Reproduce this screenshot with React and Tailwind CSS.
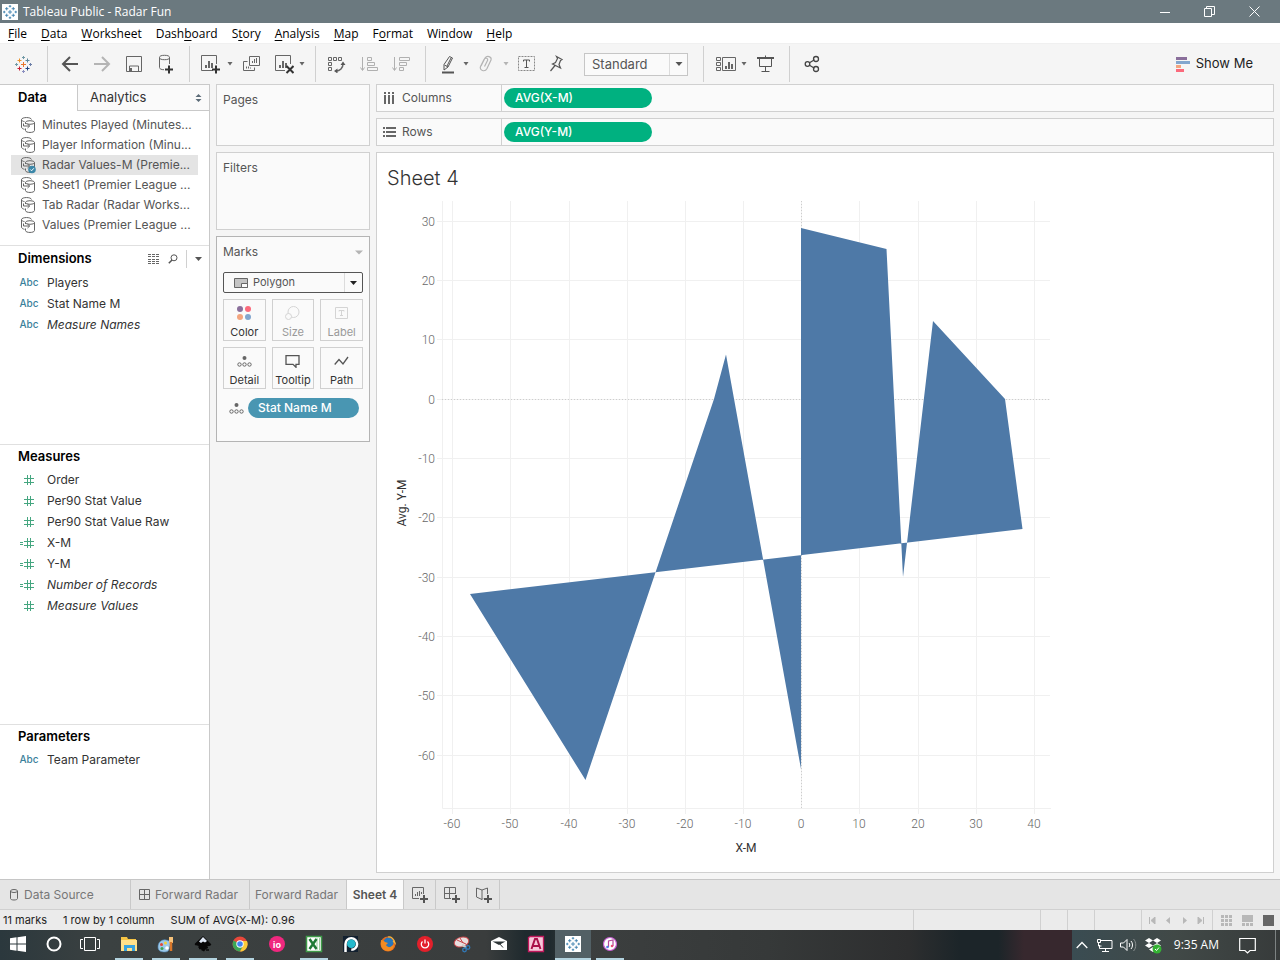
import React from "react";

/* Drawing whose viewBox origin is [x, y] and whose units are page pixels. */
function Art({ box, children, ...rest }) {
  const [x, y, w, h] = box;
  return (
    <svg width={w} height={h} viewBox={`${x} ${y} ${w} ${h}`} fill="none" className="shrink-0" aria-hidden="true" {...rest}>
      {children}
    </svg>
  );
}

const Caret = ({ color = "#666" }) => (
  <Art box={[0, 0, 6, 4]}>
    <path d="M0.5 0h5L3 3.5z" fill={color} />
  </Art>
);

const Divider = () => <div className="h-9 w-px shrink-0 bg-[#d0d0d0]" />;

function Tool({ label, className = "w-8", children }) {
  return (
    <button type="button" aria-label={label} className={`flex h-8 shrink-0 items-center justify-center ${className}`}>
      {children}
    </button>
  );
}

function SparkLogo({ size = 17, mono }) {
  const c = mono
    ? Array(9).fill(mono)
    : ["#e8762b", "#5b879b", "#eb9129", "#1f457e", "#c72035", "#7199a6", "#6d7fa8", "#7199a6", "#8b8fc0"];
  const plus = (x, y, r, k) => (
    <path key={`${x}-${y}`} d={`M${x - r} ${y}H${x + r}M${x} ${y - r}V${y + r}`} stroke={c[k]} />
  );
  return (
    <svg width={size} height={size} viewBox="0 0 17 17" fill="none" aria-hidden="true">
      {plus(8.5, 8.5, 2.5, 0)}
      {plus(12.5, 4.5, 2, 1)}
      {plus(4.5, 4.5, 2, 2)}
      {plus(12.5, 12.5, 2, 3)}
      {plus(4.5, 12.5, 2, 4)}
      {plus(8.5, 1.5, 1.5, 5)}
      {plus(15.5, 8.5, 1.5, 6)}
      {plus(1.5, 8.5, 1.5, 7)}
      {plus(8.5, 15.5, 1.5, 8)}
    </svg>
  );
}

const MENUS = [
  ["", "F", "ile"], ["", "D", "ata"], ["", "W", "orksheet"], ["Dash", "b", "oard"], ["S", "t", "ory"],
  ["", "A", "nalysis"], ["", "M", "ap"], ["F", "o", "rmat"], ["Wi", "n", "dow"], ["", "H", "elp"],
];

function TitleBar() {
  return (
    <header className="flex h-[23px] items-center bg-[#6b797f] font-['Open_Sans','Noto_Sans',sans-serif] text-white">
      <span className="ml-0.5 flex size-4 items-center justify-center bg-white">
        <SparkLogo size={14} mono="#2f78a8" />
      </span>
      <h1 className="ml-[5px] text-xs">Tableau Public - Radar Fun</h1>
      <div className="ml-auto flex h-full items-center pr-[3px]">
        <button type="button" aria-label="Minimize" className="flex w-[45px] justify-center">
          <Art box={[0, 0, 10, 10]}><path d="M0 5.5h10" stroke="#fff" /></Art>
        </button>
        <button type="button" aria-label="Restore" className="flex w-[45px] justify-center">
          <Art box={[0, 0, 11, 11]}><path d="M.5 2.5h7v8h-7zM2.5 2.5v-2h8v8h-3" stroke="#fff" /></Art>
        </button>
        <button type="button" aria-label="Close" className="flex w-[45px] justify-center">
          <Art box={[0, 0, 11, 11]}><path d="M.5.5l10 10M10.500.5l-10 10" stroke="#fff" /></Art>
        </button>
      </div>
    </header>
  );
}

function MenuBar() {
  return (
    <nav className="flex h-5 items-center gap-3.5 bg-white pt-px pl-2 font-['Open_Sans','Noto_Sans',sans-serif] text-xs text-black">
      {MENUS.map(([a, u, b]) => (
        <button type="button" key={a + u + b}>
          {a}<span className="underline underline-offset-2">{u}</span>{b}
        </button>
      ))}
    </nav>
  );
}

const Bars = ({ x, y, color = "#666" }) => (
  <path d={`M${x} ${y}v-3M${x + 3} ${y}v-7M${x + 6} ${y}v-5`} stroke={color} strokeWidth="2" />
);

function Toolbar() {
  return (
    <div className="flex h-[41px] items-center border-t border-[#f0f0f0] bg-[#f5f5f5]">
      <Tool label="Start page" className="w-[47px]"><SparkLogo /></Tool>
      <Divider />
      <div className="flex items-center pr-[7px] pl-1.5">
        <Tool label="Undo">
          <Art box={[61, 56, 18, 16]}><path d="M63 64h15M70 57l-7 7 7 7" stroke="#555" strokeWidth="2" /></Art>
        </Tool>
        <Tool label="Redo">
          <Art box={[93, 56, 18, 16]}><path d="M94 64h15M102 57l7 7-7 7" stroke="#b4b4b4" strokeWidth="2" /></Art>
        </Tool>
        <Tool label="Save">
          <Art box={[125, 55, 18, 18]}><path d="M126.500 56.500h15v15h-15zM129.500 71v-5h9v5M131 71v-3" stroke="#666" /><path d="M130 68h2v3h-2z" fill="#666" /></Art>
        </Tool>
        <Tool label="New data source">
          <Art box={[156, 55, 20, 20]}>
            <ellipse cx="164.500" cy="58.500" rx="5" ry="2.200" stroke="#666" />
            <path d="M159.500 58.500v10c0 1.500 2 2.200 4.500 2.200M169.500 58.500v6.500" stroke="#666" />
            <path d="M165 70.500h8M169 66.500v8" stroke="#333" strokeWidth="2" />
          </Art>
        </Tool>
      </div>
      <Divider />
      <div className="flex items-center pr-[9px] pl-1">
        <Tool label="New worksheet">
          <Art box={[200, 55, 20, 20]}>
            <path d="M213 71.500h-11.500v-15h15V65" stroke="#666" /><Bars x={206} y={69} />
            <path d="M212 70.500h8M216 66.500v8" stroke="#333" strokeWidth="2" />
          </Art>
        </Tool>
        <Tool label="New worksheet options" className="w-2"><Caret /></Tool>
        <Tool label="Duplicate" className="w-9">
          <Art box={[242, 55, 20, 18]}>
            <path d="M249.500 56.500h10v9h-10zM247.500 61.500h-4v9h11v-3" stroke="#666" />
            <path d="M252.500 63v-2M254.500 63v-4M256.500 63v-5M246.500 68.500v-2M248.500 68.500v-2M250.500 68.500v-1" stroke="#666" />
          </Art>
        </Tool>
        <Tool label="Clear sheet" className="w-7">
          <Art box={[273, 55, 20, 20]}>
            <path d="M284 71.500h-9.500v-15h15V65" stroke="#666" /><Bars x={279} y={69} />
            <path d="M285.500 67l7 7M292.500 67l-7 7" stroke="#333" strokeWidth="2" />
          </Art>
        </Tool>
        <Tool label="Clear options" className="w-2"><Caret /></Tool>
      </div>
      <Divider />
      <div className="flex items-center pr-2 pl-[5px]">
        <Tool label="Swap rows and columns">
          <Art box={[328, 55, 20, 18]}>
            <path d="M329.500 57.500h3v3h-3zM334.500 57.500h3v3h-3zM339.500 57.500h3v3h-3zM329.500 62.500h3v3h-3zM329.500 67.500h3v3h-3z" stroke="#666" />
            <path d="M344 64c0 4-3 7-7 7" stroke="#666" strokeWidth="1.500" />
            <path d="M341.500 65l2.500-3.500 2.500 3.500zM338.500 68.500l-3.500 2.500 3.500 2.500z" fill="#555" />
          </Art>
        </Tool>
        <Tool label="Sort ascending">
          <Art box={[360, 55, 20, 18]}>
            <path d="M363.500 57v13M361.500 67.500l2 3 2-3M368.500 57.500h4v3h-4zM368.500 62.500h7v3h-7zM368.500 67.500h10v3h-10z" stroke="#b0b0b0" />
          </Art>
        </Tool>
        <Tool label="Sort descending">
          <Art box={[392, 55, 20, 18]}>
            <path d="M395.500 57v13M393.500 67.500l2 3 2-3M400.500 57.500h10v3h-10zM400.500 62.500h7v3h-7zM400.500 67.500h4v3h-4z" stroke="#b0b0b0" />
          </Art>
        </Tool>
      </div>
      <Divider />
      <div className="flex items-center pr-[15px] pl-2">
        <Tool label="Highlight" className="w-7">
          <Art box={[440, 54, 16, 20]}>
            <path d="M442 72.500h12" stroke="#555" strokeWidth="2" />
            <path d="M449.500 56.500l3 1.500-4.500 9-4 3v-5.500zM444.500 65l3.500 2M451 58l-4 8" stroke="#555" />
          </Art>
        </Tool>
        <Tool label="Highlight options" className="w-2"><Caret /></Tool>
        <Tool label="Group members">
          <Art box={[477, 55, 16, 18]}>
            <path d="M480 66l4-8c2-3 7-1.500 6 2l-4 8.500c-2 4-8 2-6.500-2l3.500-7c1.500-2.500 4.500-1 3.500 1l-3 6" stroke="#b4b4b4" strokeWidth="1.200" />
          </Art>
        </Tool>
        <Tool label="Group options" className="w-2"><Caret color="#b4b4b4" /></Tool>
        <Tool label="Show mark labels">
          <Art box={[518, 55, 18, 18]}>
            <path d="M519.500 56.500h16v14h-16z" stroke="#888" strokeDasharray="2 1" />
            <path d="M524.500 61.500v-1.500h6v1.500M527.500 60v7.500M525.500 67.500h4" stroke="#555" />
          </Art>
        </Tool>
        <Tool label="Fix axes" className="w-[30px]">
          <Art box={[550, 55, 16, 18]}>
            <path d="M557.500 56.500l5.500 3-1.500 1-1.500 4 1.500 3.500-8-4 3-1.500 2-4zM556 65.500l-4.500 5.500" stroke="#555" strokeWidth="1.200" />
          </Art>
        </Tool>
        <div className="ml-3 grid h-[23px] w-[104px] items-center border border-[#c6c6c6] bg-[#fafafa]">
          <select aria-label="Fit" className="col-start-1 row-start-1 h-full w-full appearance-none bg-transparent pl-[7px] text-[13px] leading-5 text-[#555]">
            <option>Standard</option>
          </select>
          <span className="pointer-events-none col-start-1 row-start-1 flex h-full w-[18px] items-center justify-center justify-self-end border-l border-[#dcdcdc]">
            <Art box={[0, 0, 8, 4]}><path d="M.5 0h7L4 4z" fill="#555" /></Art>
          </span>
        </div>
      </div>
      <Divider />
      <div className="flex items-center pr-[5px] pl-2">
        <Tool label="Show/hide cards" className="w-7">
          <Art box={[715, 56, 22, 16]}>
            <path d="M716.500 57.500h4v3h-4zM716.500 62.500h4v3h-4zM716.500 67.500h4v3h-4zM722.500 57.500h13v13h-13z" stroke="#666" /><Bars x={726} y={69} />
          </Art>
        </Tool>
        <Tool label="Card options" className="w-2"><Caret /></Tool>
        <Tool label="Presentation mode" className="w-9">
          <Art box={[757, 55, 18, 18]}>
            <path d="M757 58h17" stroke="#555" strokeWidth="2" />
            <path d="M759.500 58v8.500h12V58M765.500 55.500v2M765.500 67v4M761.500 71.500h8" stroke="#555" />
          </Art>
        </Tool>
      </div>
      <Divider />
      <Tool label="Share" className="ml-1.5 w-8">
        <Art box={[804, 55, 16, 18]}>
          <path d="M809.500 62.800l5-3M809.500 65.200l5 3" stroke="#444" strokeWidth="1.300" />
          <circle cx="807.500" cy="64" r="2.300" stroke="#444" strokeWidth="1.300" />
          <circle cx="816" cy="59" r="2.500" stroke="#444" strokeWidth="1.300" />
          <circle cx="816" cy="69" r="2.500" stroke="#444" strokeWidth="1.300" />
        </Art>
      </Tool>
      <button type="button" className="mr-[27px] ml-auto flex items-center gap-1.5 text-[13px] text-[#222]">
        <Art box={[0, 0, 14, 15]}>
          <path d="M0 0h11v3H0z" fill="#8a6f9b" /><path d="M0 4h14v3H0z" fill="#82a6ce" />
          <path d="M0 8h5v3H0z" fill="#f3a57f" /><path d="M0 12h8v3H0z" fill="#fb6a7c" />
        </Art>
        Show Me
      </button>
    </div>
  );
}

const SOURCES = [
  "Minutes Played (Minutes...", "Player Information (Minu...", "Radar Values-M (Premie...",
  "Sheet1 (Premier League ...", "Tab Radar (Radar Works...", "Values (Premier League ...",
];

const SourceIcon = ({ active }) => (
  <Art box={[0, 0, 16, 18]}>
    <path d="M1.500 3.500v7.500c0 1.200 1.500 2 3 2.300M11.500 3.500c-.5-2.600-9.500-2.600-10 0 0 1.200 1.200 1.900 3 2.100" stroke="#666" />
    <ellipse cx="10" cy="6.500" rx="4.500" ry="1.800" stroke="#666" />
    <path d="M5.500 6.500v1.500M5.500 12.500v2c0 2.600 9 2.600 9 0v-8M3.500 7.500v2.500h6M7.500 8l2.200 2-2.200 2" stroke="#666" />
    {active && (
      <>
        <circle cx="12" cy="13.500" r="3.800" fill="#3b87a8" />
        <path d="M10.300 13.500l1.300 1.300 2.200-2.500" stroke="#fff" />
      </>
    )}
  </Art>
);

const AbcIcon = () => <span className="w-5 text-center text-[10px] font-medium text-[#3b7f9b]">Abc</span>;
const HashIcon = ({ calc }) => (
  <Art box={[4, 0, 20, 12]}>
    <path d="M9 4.500h10M9 8.500h10M12.500 1v10M15.500 1v10" stroke="#45a680" />
    {calc && <path d="M5 5.500h3M5 7.500h3" stroke="#45a680" />}
  </Art>
);

function Field({ kind = "abc", italic, children }) {
  return (
    <li className="flex h-[21px] items-center gap-2 pl-[19px] text-[#333]">
      {kind === "abc" ? <AbcIcon /> : <HashIcon calc={kind === "calc"} />}
      <span className={italic ? "italic" : ""}>{children}</span>
    </li>
  );
}

function DataPane() {
  return (
    <aside className="flex w-[210px] shrink-0 flex-col border-t border-r border-[#c9c9c9] bg-white text-xs">
      <div className="flex h-[26px] text-[13px]" role="tablist">
        <button type="button" role="tab" aria-selected="true" className="w-[77px] pr-3 text-center font-semibold text-black">Data</button>
        <button type="button" role="tab" aria-selected="false" className="flex flex-1 items-center justify-between border-b border-l border-[#c9c9c9] bg-[#fafafa] pr-[7px] pl-3 text-[#333]">
          Analytics
          <Art box={[0, 0, 7, 8]}><path d="M3.500 0l3 3h-6zM.5 5h6l-3 3z" fill="#5c6c78" /></Art>
        </button>
      </div>
      <ul className="mt-1 h-[130px] text-[#555]">
        {SOURCES.map((s, i) => (
          <li key={s} className={`mr-[11px] ml-[11px] flex h-5 items-center gap-1.5 pl-[9px] whitespace-nowrap ${i === 2 ? "bg-[#e4e4e4]" : ""}`}>
            <SourceIcon active={i === 2} />
            {s}
          </li>
        ))}
      </ul>
      <section className="h-[199px] border-t border-[#e0e0e0]">
        <div className="flex h-[26px] items-center pr-[7px] pl-[18px]">
          <h2 className="text-[13px] font-semibold text-black">Dimensions</h2>
          <button type="button" aria-label="View data" className="ml-auto">
            <Art box={[0, 0, 12, 10]}>
              <path d="M0 .5h12M0 2.500h12M0 5.500h12M0 7.500h12M0 9.500h12" stroke="#666" strokeDasharray="3 1" />
            </Art>
          </button>
          <button type="button" aria-label="Find field" className="ml-2">
            <Art box={[0, 0, 10, 10]}><circle cx="6" cy="3.800" r="3" stroke="#555" /><path d="M4 6L.8 9.200" stroke="#555" strokeWidth="1.500" /></Art>
          </button>
          <span className="ml-2 h-[18px] w-px bg-[#d0d0d0]" />
          <button type="button" aria-label="Dimension options" className="ml-2">
            <Art box={[0, 0, 7, 4]}><path d="M0 0h7L3.500 4z" fill="#555" /></Art>
          </button>
        </div>
        <ul>
          <Field>Players</Field>
          <Field>Stat Name M</Field>
          <Field italic>Measure Names</Field>
        </ul>
      </section>
      <section className="h-[280px] border-t border-[#e0e0e0]">
        <h2 className="flex h-6 items-center pl-[18px] text-[13px] font-semibold text-black">Measures</h2>
        <ul>
          <Field kind="num">Order</Field>
          <Field kind="num">Per90 Stat Value</Field>
          <Field kind="num">Per90 Stat Value Raw</Field>
          <Field kind="calc">X-M</Field>
          <Field kind="calc">Y-M</Field>
          <Field kind="calc" italic>Number of Records</Field>
          <Field kind="num" italic>Measure Values</Field>
        </ul>
      </section>
      <section className="flex-1 border-t border-[#e0e0e0]">
        <h2 className="flex h-6 items-center pl-[18px] text-[13px] font-semibold text-black">Parameters</h2>
        <ul><Field>Team Parameter</Field></ul>
      </section>
    </aside>
  );
}

const DetailIcon = () => (
  <Art box={[0, 0, 15, 11]}>
    <circle cx="7.500" cy="2" r="2" fill="#666" />
    <circle cx="2.500" cy="8.500" r="1.700" stroke="#666" /><circle cx="7.500" cy="8.500" r="1.700" stroke="#666" /><circle cx="12.500" cy="8.500" r="1.700" stroke="#666" />
  </Art>
);

const MARK_BUTTONS = [
  ["Color", false, <Art box={[0, 0, 14, 14]}><circle cx="3" cy="3" r="3" fill="#8a6f9b" /><circle cx="11" cy="3" r="3" fill="#fb6a7c" /><circle cx="3" cy="11" r="3" fill="#f3a57f" /><circle cx="11" cy="11" r="3" fill="#82a6ce" /></Art>],
  ["Size", true, <Art box={[0, 0, 15, 14]}><circle cx="8.500" cy="6" r="5.500" stroke="#d4d4d4" /><circle cx="3.500" cy="10.500" r="3" stroke="#d4d4d4" fill="#fafafa" /></Art>],
  ["Label", true, <Art box={[0, 0, 14, 12]}><path d="M.5.5h12v11H.5zM4 4.500v-1h5v1M6.500 3.500v5M5 8.500h3" stroke="#d4d4d4" /></Art>],
  ["Detail", false, <DetailIcon />],
  ["Tooltip", false, <Art box={[0, 0, 15, 13]}><path d="M1 .7h13v8.600h-3v3l-3-3H1z" stroke="#555" strokeWidth="1.300" /></Art>],
  ["Path", false, <Art box={[0, 0, 15, 10]}><path d="M.7 8.500L5 3.500l4 4.500L14 1" stroke="#555" strokeWidth="1.300" /></Art>],
];

function Shelves() {
  return (
    <div className="flex w-[154px] shrink-0 flex-col gap-1.5 text-xs text-[#555]">
      <section className="h-[62px] border border-[#d0d0d0] bg-[#fafafa] px-1.5"><h2 className="leading-[30px]">Pages</h2></section>
      <section className="h-[78px] border border-[#d0d0d0] bg-[#fafafa] px-1.5"><h2 className="leading-[30px]">Filters</h2></section>
      <section className="h-[206px] border border-[#b4b4b4] bg-[#fafafa] px-1.5">
        <div className="mb-[5px] flex h-[30px] items-center justify-between">
          <h2>Marks</h2>
          <button type="button" aria-label="Marks options"><Art box={[0, 0, 8, 5]}><path d="M0 .5h8L4 4.500z" fill="#b4b4b4" /></Art></button>
        </div>
        <div className="grid h-[21px] items-center rounded-xs border border-[#555] bg-[#fafafa]">
          <span className="pointer-events-none col-start-1 row-start-1 ml-2.5">
            <Art box={[0, 0, 14, 10]}><path d="M.5.5h13v9H.5z" fill="#c4c4c4" stroke="#666" /><path d="M7.500 5.500h6v4h-6z" fill="#fafafa" stroke="#666" /></Art>
          </span>
          <select aria-label="Mark type" className="col-start-1 row-start-1 h-full w-full appearance-none bg-transparent pl-[29px] text-[11px]">
            <option>Polygon</option>
          </select>
          <span className="pointer-events-none col-start-1 row-start-1 flex h-full w-[18px] items-center justify-center justify-self-end border-l border-[#dcdcdc]">
            <Art box={[0, 0, 7, 4]}><path d="M0 0h7L3.500 4z" fill="#222" /></Art>
          </span>
        </div>
        <div className="mt-1.5 grid grid-cols-3 gap-1.5">
          {MARK_BUTTONS.map(([name, off, icon]) => (
            <button type="button" key={name} disabled={off} className={`flex h-[42px] flex-col items-center border border-[#d0d0d0] text-[11px] leading-4 ${off ? "text-[#999]" : "text-[#333]"}`}>
              <span className="flex h-6 items-center pt-0.5">{icon}</span>
              {name}
            </button>
          ))}
        </div>
        <div className="mt-[9px] flex items-center gap-1 pl-1.5">
          <DetailIcon />
          <button type="button" className="mr-1 h-5 flex-1 rounded-full bg-[#4996b2] pl-2.5 text-left font-medium text-white">Stat Name M</button>
        </div>
      </section>
    </div>
  );
}

function Shelf({ name, icon, pill }) {
  return (
    <div className="flex h-7 items-stretch border border-[#d0d0d0] bg-[#fafafa] text-xs">
      <div className="flex w-[125px] items-center gap-1.5 border-r border-[#d0d0d0] pl-1.5 text-[#555]">{icon}{name}</div>
      <button type="button" className="my-auto ml-0.5 h-5 w-[148px] rounded-full bg-[#00b180] pl-[11px] text-left font-medium text-white">{pill}</button>
    </div>
  );
}

const X_TICKS = [[-60, 452], [-50, 510], [-40, 569], [-30, 627], [-20, 685], [-10, 743], [0, 801], [10, 859], [20, 918], [30, 976], [40, 1034]];
const Y_TICKS = [[30, 221], [20, 280], [10, 339], [0, 399], [-10, 458], [-20, 517], [-30, 577], [-40, 636], [-50, 695], [-60, 755]];

function Chart() {
  return (
    <svg width="670" height="664" viewBox="387 196 670 664" className="ml-2.5 block font-['Roboto',sans-serif] text-xs" role="img" aria-label="Polygon of Avg. Y-M against X-M">
      <g stroke="#f0f0f0">
        <path d="M442.500 201V808.500H1051" fill="none" />
        {X_TICKS.map(([v, x]) => <path key={v} d={`M${x + 0.5} 201V${v === 0 ? 808 : 814}`} />)}
        {Y_TICKS.map(([v, y]) => <path key={v} d={`M437 ${y + 0.5}H1050`} />)}
      </g>
      <path d="M801.500 201V808M442 399.500H1050" stroke="#cdcdcd" strokeDasharray="1 2" />
      <path d="M801 228L886.500 249L903 577L933 321L1005 399L1022.500 529L470 594L585.500 780L714 399L726 354.500L801 769Z" fill="#4e79a7" fillRule="evenodd" />
      <g fill="#666" textAnchor="middle" fontWeight="300">
        {X_TICKS.map(([v, x]) => <text key={v} x={x} y="828">{v}</text>)}
      </g>
      <g fill="#666" textAnchor="end" fontWeight="300">
        {Y_TICKS.map(([v, y]) => <text key={v} x="435" y={y + 5}>{v}</text>)}
      </g>
      <g fill="#333" textAnchor="middle">
        <text x="746" y="852">X-M</text>
        <text transform="translate(406 503) rotate(-90)">Avg. Y-M</text>
      </g>
    </svg>
  );
}

function Sheet() {
  return (
    <main className="flex min-w-0 flex-1 flex-col gap-1.5">
      <Shelf name="Columns" pill="AVG(X-M)" icon={
        <Art box={[0, 0, 13, 12]}><path d="M2 3v9M6 3v9M10 3v9M2 0v2M6 0v2M10 0v2" stroke="#666" strokeWidth="2" /></Art>} />
      <Shelf name="Rows" pill="AVG(Y-M)" icon={
        <Art box={[0, 0, 13, 11]}><path d="M3 1h10M3 5h10M3 9h10M0 1h2M0 5h2M0 9h2" stroke="#666" strokeWidth="2" /></Art>} />
      <section className="flex-1 border border-[#d0d0d0] bg-white">
        <h2 className="h-[43px] pt-2 pl-2.5 text-xl leading-[34px] font-light text-[#333]">Sheet 4</h2>
        <Chart />
      </section>
    </main>
  );
}

const GridGlyph = () => <Art box={[0, 0, 12, 12]}><path d="M.5.5h10v10H.5zM5.500.5v10M.5 5.500h10" stroke="#666" /></Art>;

function SheetTabs() {
  const plus = <path d="M9 12h8M13 8v8" stroke="#555" strokeWidth="2" />;
  return (
    <div className="flex h-[30px] items-stretch border-t border-[#c6c6c6] bg-[#e5e5e5] text-xs text-[#777]">
      <button type="button" className="flex w-[131px] items-center gap-1 border-r border-[#c9c9c9] pl-[9px]">
        <Art box={[0, 0, 11, 12]}><ellipse cx="5" cy="2" rx="3.500" ry="1.500" stroke="#666" /><path d="M1.500 2v7.500c0 2 7 2 7 0V2" stroke="#666" /></Art>
        Data Source
      </button>
      <button type="button" className="flex w-[119px] items-center gap-1 border-r border-[#c9c9c9] pl-2"><GridGlyph />Forward Radar</button>
      <button type="button" className="w-[97px] border-r border-[#c9c9c9] pl-[5px] text-left">Forward Radar</button>
      <button type="button" className="w-[57px] border-r border-[#c9c9c9] bg-[#fafafa] text-center font-semibold text-[#555]">Sheet 4</button>
      <button type="button" aria-label="New worksheet" className="flex w-8 items-center justify-center border-r border-[#c9c9c9]">
        <Art box={[0, 0, 17, 16]}><path d="M8 11.500H1.500V.5h11V7M4.500 9V7M6.500 9V5M8.500 9V4M10.500 7V5" stroke="#666" />{plus}</Art>
      </button>
      <button type="button" aria-label="New dashboard" className="flex w-8 items-center justify-center border-r border-[#c9c9c9]">
        <Art box={[0, 0, 17, 16]}><path d="M8 11.500H1.500V.5h11V7M6.500.5v11M1.500 6.500h11" stroke="#666" />{plus}</Art>
      </button>
      <button type="button" aria-label="New story" className="flex w-8 items-center justify-center border-r border-[#c9c9c9]">
        <Art box={[0, 0, 17, 16]}><path d="M8 11.500l-1 1-5.500-2.500V1l5.500 2 5.500-2v6M7 3v9.500" stroke="#666" />{plus}</Art>
      </button>
    </div>
  );
}

function StatusBar() {
  return (
    <div className="flex h-[21px] items-stretch border-t border-[#d0d0d0] bg-[#ebebeb] text-[11px] text-[#222]">
      <div className="flex items-center gap-4 pl-[3px]">
        <span>11 marks</span><span>1 row by 1 column</span><span>SUM of AVG(X-M): 0.96</span>
      </div>
      <div className="ml-auto flex items-stretch">
        <div className="w-[127px] border-l border-[#d0d0d0]" />
        <div className="w-[27px] border-l border-[#d0d0d0]" />
        <div className="w-[27px] border-l border-[#d0d0d0]" />
        <div className="w-[47px] border-l border-[#d0d0d0]" />
        <div className="flex w-[71px] items-center justify-center gap-2 border-l border-[#d0d0d0]">
          {[["First", "M.5 0v7M6 0v7L2 3.500z"], ["Previous", "M5 0v7L1 3.500z"], ["Next", "M2 0v7l4-3.500z"], ["Last", "M1 0v7l4-3.500zM6.500 0v7"]].map(([n, d]) => (
            <button type="button" key={n} aria-label={n}><Art box={[0, 0, 8, 7]}><path d={d} fill="#b8b8b8" stroke={n === "First" || n === "Last" ? "#b8b8b8" : "none"} strokeWidth="1" /></Art></button>
          ))}
        </div>
        <div className="flex w-[68px] items-center gap-2.5 border-l border-[#d0d0d0] pl-2">
          <button type="button" aria-label="Sheet sorter"><Art box={[0, 0, 11, 11]}><path d="M0 1.500h11M0 5.500h11M0 9.500h11" stroke="#b8b8b8" strokeWidth="3" strokeDasharray="3 1" /></Art></button>
          <button type="button" aria-label="Filmstrip"><Art box={[0, 0, 11, 11]}><path d="M0 0h11v7H0zM0 8h3v3H0zM4 8h3v3H4zM8 8h3v3H8z" fill="#b8b8b8" /></Art></button>
          <button type="button" aria-label="Tabs"><Art box={[0, 0, 11, 11]}><path d="M0 0h11v11H0z" fill="#666" /></Art></button>
        </div>
      </div>
    </div>
  );
}

const APPS = [
  ["File Explorer", true, <><path d="M1 2h6l1 2h8v12H1z" fill="#f5c445" /><path d="M1 5h16v11H1z" fill="#ffe08a" /><path d="M4 10h11v6h-3v-3H7v3H4z" fill="#36a3e0" /></>],
  ["Paint", true, <><path d="M1 12C1 7 5 4 9 5c4 .5 5 3 4 6s-1 6-5 6-7-1-7-5z" fill="#9cc9ea" stroke="#4f87b5" strokeWidth=".6" /><circle cx="4.500" cy="9.500" r="1.500" fill="#e0473a" /><circle cx="8.500" cy="8" r="1.500" fill="#f4d03a" /><circle cx="5" cy="13.500" r="1.500" fill="#3ea455" /><circle cx="10" cy="13" r="1.800" fill="#fff" /><path d="M14 2v6" stroke="#f6c27a" strokeWidth="4" /><path d="M14 7v9" stroke="#d9772b" strokeWidth="2.500" /></>],
  ["Inkscape", true, <><path d="M9 1l8 8c1 1.500-2 2-4 2.500 2 1 1 2-1 2.500l-2 2.500-3-1.500 1-1.500c-3 0-5-1-3-2.500-3-.500-5-1-4-2.500z" fill="#080808" /><path d="M9 2l4 4-2 1.500-2-1-2 1.500-2-1.500z" fill="#dfe8f5" /><path d="M5 13.500h4M12 15h3" stroke="#080808" strokeWidth="1.500" /></>],
  ["Chrome", true, <><circle cx="9" cy="9" r="7.500" fill="#e8483b" /><path d="M2.500 5.500A7.500 7.500 0 0 0 9 16.500L12 11 9 9z" fill="#3ca757" /><path d="M9 16.500A7.500 7.500 0 0 0 16 6H9l3 5z" fill="#fbcb3b" /><circle cx="9" cy="9" r="3.700" fill="#fff" /><circle cx="9" cy="9" r="2.800" fill="#4285f4" /></>],
  ["io", false, <><circle cx="9" cy="9" r="8" fill="#f0287f" /><text x="9" y="12.500" textAnchor="middle" fill="#fff" fontSize="9" fontWeight="700">io</text></>],
  ["Excel", true, <><path d="M1.500 1.500h15v15h-15z" fill="#fff" stroke="#3f9b49" strokeWidth="1.500" /><path d="M12 3v12M14.500 3v12" stroke="#9ccc9f" /><path d="M4.500 4l7 10M11.500 4l-7 10" stroke="#1f7a35" strokeWidth="2.500" /></>],
  ["P", false, <><path d="M1 1h15v16H1z" fill="#12202f" /><path d="M3.500 17V9a5.800 5.800 0 1 1 5.800 5.800" stroke="#fff" strokeWidth="2.500" /><circle cx="9.300" cy="8.800" r="4.300" fill="#25b9cc" /></>],
  ["Firefox", false, <><circle cx="9" cy="9" r="7.500" fill="#e66b1c" /><circle cx="9.500" cy="7.500" r="5" fill="#2877bb" /><path d="M2 5c2 0 3 1 4 2l3 1-2 2c2 3 5 3 8-1 0 5-3 7-6 7-5 0-8-4-7-11z" fill="#f28b22" /><path d="M9 2c3-1 6 2 7 6l-2-2" stroke="#f5b43b" strokeWidth="1.200" /></>],
  ["Power", false, <><circle cx="9" cy="9" r="8" fill="#e3202b" /><path d="M6.500 6.500a3.700 3.700 0 1 0 5 0M9 4.500v4" stroke="#fff" strokeWidth="1.300" /></>],
  ["Snipping Tool", false, <><ellipse cx="8.500" cy="7" rx="7.500" ry="4.800" fill="#e9dfe0" stroke="#c84247" transform="rotate(-15 8.500 7)" /><path d="M4 5l9 4M7 3l3 5" stroke="#c84247" /><path d="M9 10l4 2" stroke="#ccc" strokeWidth="2" /><circle cx="11.500" cy="15" r="1.800" stroke="#3179b8" strokeWidth="1.300" /><circle cx="15" cy="12.500" r="1.800" stroke="#3179b8" strokeWidth="1.300" /></>],
  ["Mail", false, <><path d="M1 6l8-4 8 4v9H1z" fill="#fff" /><path d="M2.500 6.500h13L9 10z" fill="#2c3436" /><path d="M9 8l4 4.500" stroke="#2c3436" /></>],
  ["Access", false, <><path d="M1.500 2.500l2-1h13v15h-15z" fill="#f6c7da" stroke="#c0185c" strokeWidth="1.300" /><path d="M4.500 14L8 4h2l3.500 10M6 11h6" stroke="#a90f49" strokeWidth="2" /></>],
];

function Task({ label, running, wide = "w-[37px]", children }) {
  return (
    <button type="button" aria-label={label} className={`flex h-full shrink-0 items-center justify-center ${wide}`}>
      <span className={`flex h-full w-7 items-center justify-center border-b-2 ${running ? "border-[#b3d3df]" : "border-transparent"}`}>{children}</span>
    </button>
  );
}

function Taskbar() {
  return (
    <footer className="flex h-[30px] items-center bg-[linear-gradient(90deg,#2b383d_0%,#3b4141_8%,#3a3d3d_38%,#1f2a2e_41%,#1f2a2e_43%,#3c3f3f_45%,#363939_60%,#2d2e2f_71%,#1c2529_75%,#1c2529_78%,#37282e_80%,#37282e_84%)] font-['Open_Sans','Noto_Sans',sans-serif] text-white">
      <Task label="Start" wide="w-9"><Art box={[0, 0, 16, 16]}><path d="M0 2.300l6.500-1V7.500H0zM7.500 1.200L16 0v7.500H7.500zM0 8.500h6.500v6.200L0 13.700zM7.500 8.500H16V16l-8.500-1.200z" fill="#fff" /></Art></Task>
      <Task label="Cortana" wide="w-9"><Art box={[0, 0, 16, 16]}><circle cx="8" cy="8" r="6.500" stroke="#fff" strokeWidth="2" /></Art></Task>
      <Task label="Task view" wide="w-9 mr-0.5"><Art box={[0, 0, 20, 16]}><path d="M4.500 1.500h11v13h-11zM3 3.500H.5v9H3M17 3.500h2.500v9H17" stroke="#fff" /></Art></Task>
      {APPS.map(([name, run, art]) => (
        <Task key={name} label={name} running={run}><Art box={[0, 0, 18, 18]}>{art}</Art></Task>
      ))}
      <button type="button" aria-label="Tableau Public" className="ml-px flex h-full w-9 items-center justify-center border-b-2 border-[#b3d3df] bg-[#526065]">
        <span className="flex size-4 items-center justify-center bg-white"><SparkLogo size={14} mono="#2f78a8" /></span>
      </button>
      <Task label="iTunes" running>
        <Art box={[0, 0, 16, 16]}><circle cx="8" cy="8" r="6.500" fill="#fff" stroke="#c65bd0" strokeWidth="1.200" /><path d="M6.500 11V5l4.500-1v6" stroke="#b5479c" strokeWidth="1.200" /><circle cx="5.500" cy="11" r="1.300" fill="#4f7de8" /><circle cx="10" cy="10" r="1.300" fill="#e84f78" /></Art>
      </Task>
      <div className="ml-auto flex h-full items-center bg-linear-to-r from-[#3a4c52] via-[#414947] to-[#373b3b]">
        <button type="button" aria-label="Show hidden icons" className="px-1"><Art box={[0, 0, 12, 8]}><path d="M.7 7L6 1.500 11.300 7" stroke="#fff" strokeWidth="1.300" /></Art></button>
        <button type="button" aria-label="Network" className="pl-1"><Art box={[0, 0, 17, 14]}><path d="M5 2.500h11v8H3.500V7M9.500 10.500v3M6 13.500h7M1.500 1.500h3v3h-3zM2.500 5v3h3" stroke="#fff" /></Art></button>
        <button type="button" aria-label="Volume" className="pl-[7px]"><Art box={[0, 0, 17, 14]}><path d="M.5 5h3L7 1.500v11L3.500 9h-3z" stroke="#fff" /><path d="M9 5c1 1 1 3 0 4M11 3c2 2 2 6 0 8" stroke="#fff" /><path d="M13.500 1c3 3 3 9 0 12" stroke="#8a9090" /></Art></button>
        <button type="button" aria-label="Dropbox" className="pl-2">
          <Art box={[0, 0, 17, 17]}>
            <path d="M4 1l4 2.500L4 6 0 3.500zM12 1l4 2.500L12 6 8 3.500zM4 6l4 2.500L4 11 0 8.500zM12 6l4 2.500L12 11 8 8.500zM8 10l4 2.500L8 15l-4-2.500z" fill="#fff" />
            <circle cx="12" cy="12" r="4.500" fill="#34b233" /><path d="M10 12l1.500 1.500 2.500-3" stroke="#fff" />
          </Art>
        </button>
        <time className="ml-3 text-xs">9:35 AM</time>
        <button type="button" aria-label="Notifications" className="ml-5"><Art box={[0, 0, 17, 17]}><path d="M.7 1.500h15.600v12H11L8.500 16 6 13.500H.7z" stroke="#fff" strokeWidth="1.200" /></Art></button>
        <span className="ml-[19px] h-full border-l border-[#7d8383] pl-1" />
      </div>
    </footer>
  );
}

export default function App() {
  return (
    <div className="flex min-h-screen flex-col bg-[#f5f5f5] font-['Inter','Liberation_Sans',sans-serif]">
      <TitleBar />
      <MenuBar />
      <Toolbar />
      <div className="flex flex-1 items-stretch gap-1.5">
        <DataPane />
        <Shelves />
        <div className="flex min-w-0 flex-1 pr-1.5 pb-1.5"><Sheet /></div>
      </div>
      <SheetTabs />
      <StatusBar />
      <Taskbar />
    </div>
  );
}
